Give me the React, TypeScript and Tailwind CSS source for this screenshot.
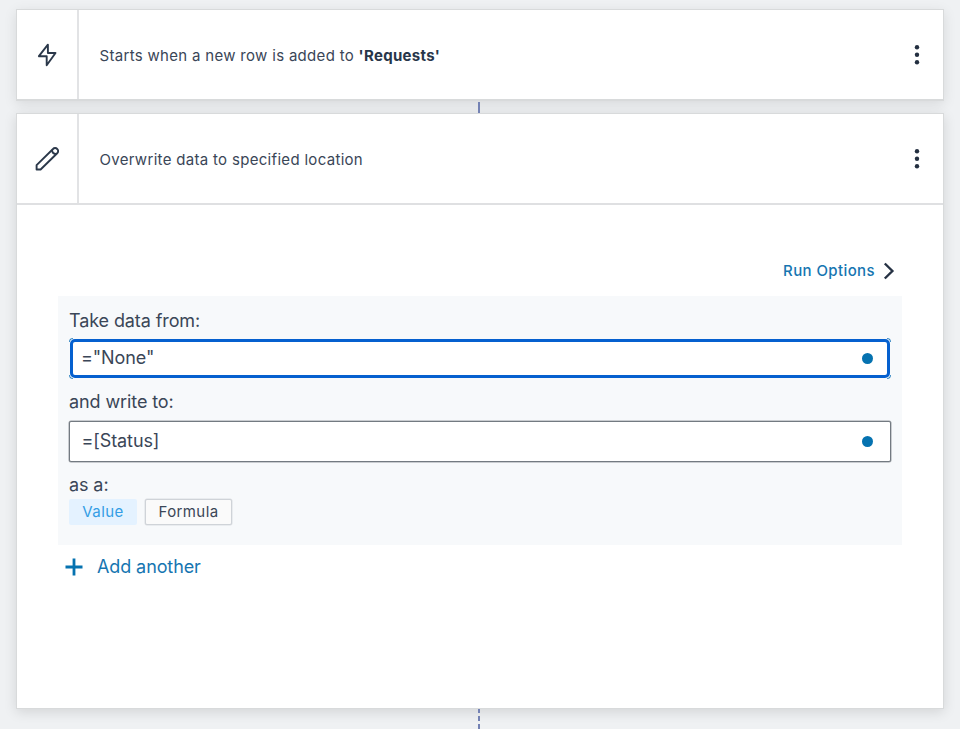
import clsx from "clsx"
import React from "react"

const BoltIcon = () => (
  <svg width="20" height="24" viewBox="0 0 20 24" fill="none" stroke="#2b384a" strokeWidth="1.9" strokeLinejoin="round">
    <path d="M10.9 1.7 1.9 13.2h7.8v9l8.8-12.2h-7.6z" />
  </svg>
)

const PencilIcon = () => (
  <svg width="24" height="24" viewBox="0 0 24 24" fill="none" stroke="#2b384a" strokeWidth="1.9" strokeLinejoin="round">
    <path d="M1.6 22.5v-4.4L18 2a2.8 2.8 0 0 1 4.2 0 2.8 2.8 0 0 1 0 4.2L5.6 22.5z" />
    <path d="M17 2.9c.1 2.6 1.6 4.2 4.4 4.2" />
  </svg>
)

const MoreIcon = () => (
  <svg width="6" height="20" viewBox="0 0 6 20" fill="#232f40">
    <circle cx="3" cy="2.2" r="2.2" />
    <circle cx="3" cy="9.7" r="2.2" />
    <circle cx="3" cy="17.3" r="2.2" />
  </svg>
)

const StepHeader = ({ icon, children }: { icon: React.ReactNode; children: React.ReactNode }) => (
  <div className="flex h-[89px] items-stretch">
    <div className="flex w-[62px] items-center justify-center border-r-2 border-[#e2e3e5]">{icon}</div>
    <div className="flex flex-1 items-center pt-[3px] pl-[20.5px] text-[15px] tracking-[0.31px]">
      <span>{children}</span>
    </div>
    <button className="flex w-[53px] items-center justify-center">
      <MoreIcon />
    </button>
  </div>
)

const Field = ({ value, focused }: { value: string; focused?: boolean }) => (
  <div className={clsx("relative w-[822px]", focused ? "h-[41px] px-[1px] py-[1px]" : "h-[41px]")}>
    {focused && (
      <>
        <span className="absolute top-0 left-0 h-[4px] w-[4px] rounded-tl-[4px] border-t border-l border-[#3f8cc4]"></span>
        <span className="absolute top-0 right-0 h-[4px] w-[4px] rounded-tr-[4px] border-t border-r border-[#3f8cc4]"></span>
        <span className="absolute bottom-0 left-0 h-[4px] w-[4px] rounded-bl-[4px] border-b border-l border-[#3f8cc4]"></span>
        <span className="absolute right-0 bottom-0 h-[4px] w-[4px] rounded-br-[4px] border-r border-b border-[#3f8cc4]"></span>
      </>
    )}
    <div
      className={clsx(
        "relative flex h-full items-center justify-between bg-white",
        focused
          ? "rounded-[5px] border-[3px] border-[#0560cf] pr-[14px] pl-[8px]"
          : "rounded-[2px] border border-[#737a81] pr-[17px] pl-[11.5px] shadow-[0_0_0_0.5px_#9ba0a5]"
      )}
    >
      <span className="-mt-[2px] text-[18px]">{value}</span>
      <span className="h-[11px] w-[11px] rounded-full bg-[#0572b0]"></span>
    </div>
  </div>
)

const App = () => {
  return (
    <div className="h-[729px] w-[960px] overflow-hidden bg-[#eff1f3] px-4 pt-[9px] font-['Inter',sans-serif] text-[#3a4657]">
      <section className="h-[92px] border border-b-2 border-[#d8dadb] bg-white shadow-[0_3px_12px_rgba(0,0,0,0.1)]">
        <StepHeader icon={<BoltIcon />}>
          Starts when a new row is added to <b className="font-bold text-[#28364a]">'Requests'</b>
        </StepHeader>
      </section>

      <div className="relative ml-[462px] h-[12px] w-[2px] pt-[1px]">
        <div className="h-[11px] w-[2px] bg-[#7482b4]"></div>
      </div>

      <section className="h-[596px] border border-[#d8dadb] bg-white shadow-[0_3px_12px_rgba(0,0,0,0.12)]">
        <div className="border-b-2 border-[#dfe0e2]">
          <StepHeader icon={<PencilIcon />}>Overwrite data to specified location</StepHeader>
        </div>

        <div className="flex flex-col px-[41px] pt-[54px]">
          <button className="mr-[7px] flex h-6 items-center self-end text-[15px] font-medium tracking-[0.4px] text-[#1675b1]">
            <span className="pt-px">Run Options</span>
            <svg className="ml-2" width="12" height="18" viewBox="0 0 12 18" fill="none" stroke="#263244" strokeWidth="2.4">
              <path d="m1.8 1.5 7.6 7.5-7.6 7.5" />
            </svg>
          </button>

          <div className="mt-[13px] h-[249px] bg-[#f7f9fb] pt-[13px] pr-[10px] pl-[11px] text-[18px] tracking-[-0.1px]">
            <div className="h-[29px] leading-6">Take data from:</div>
            <Field value={'="None"'} focused />
            <div className="mt-[11px] h-[31px] leading-6">and write to:</div>
            <Field value="=[Status]" />
            <div className="mt-[11px] h-[26px] leading-6">as a:</div>
            <div className="flex gap-2 text-[15px] tracking-[0.4px]">
              <button className="h-[26px] w-[68px] rounded-[2px] bg-[#e4f2ff] text-[#339de5]">Value</button>
              <button className="h-[26px] w-[87px] rounded-[2px] border border-[#cfd3d8] bg-[#fafafa] shadow-[0_0_0_0.5px_#dcdfe3]">
                Formula
              </button>
            </div>
          </div>

          <button className="mt-[10px] ml-[7px] flex h-6 items-center self-start text-[18px] tracking-[-0.1px] text-[#1675b1]">
            <svg className="mr-[14px]" width="18" height="18" viewBox="0 0 18 18" stroke="#0572b0" strokeWidth="2.8">
              <path d="M9 .5v17M.5 9h17" />
            </svg>
            <span className="-mt-[2px]">Add another</span>
          </button>
        </div>
      </section>

      <div className="ml-[462px] flex h-5 flex-col gap-[3px]">
        <div className="h-[4px] w-[2px] bg-[#7482b4]"></div>
        <div className="h-[5px] w-[2px] bg-[#7482b4]"></div>
        <div className="h-[5px] w-[2px] bg-[#7482b4]"></div>
      </div>
    </div>
  )
}

export default App
